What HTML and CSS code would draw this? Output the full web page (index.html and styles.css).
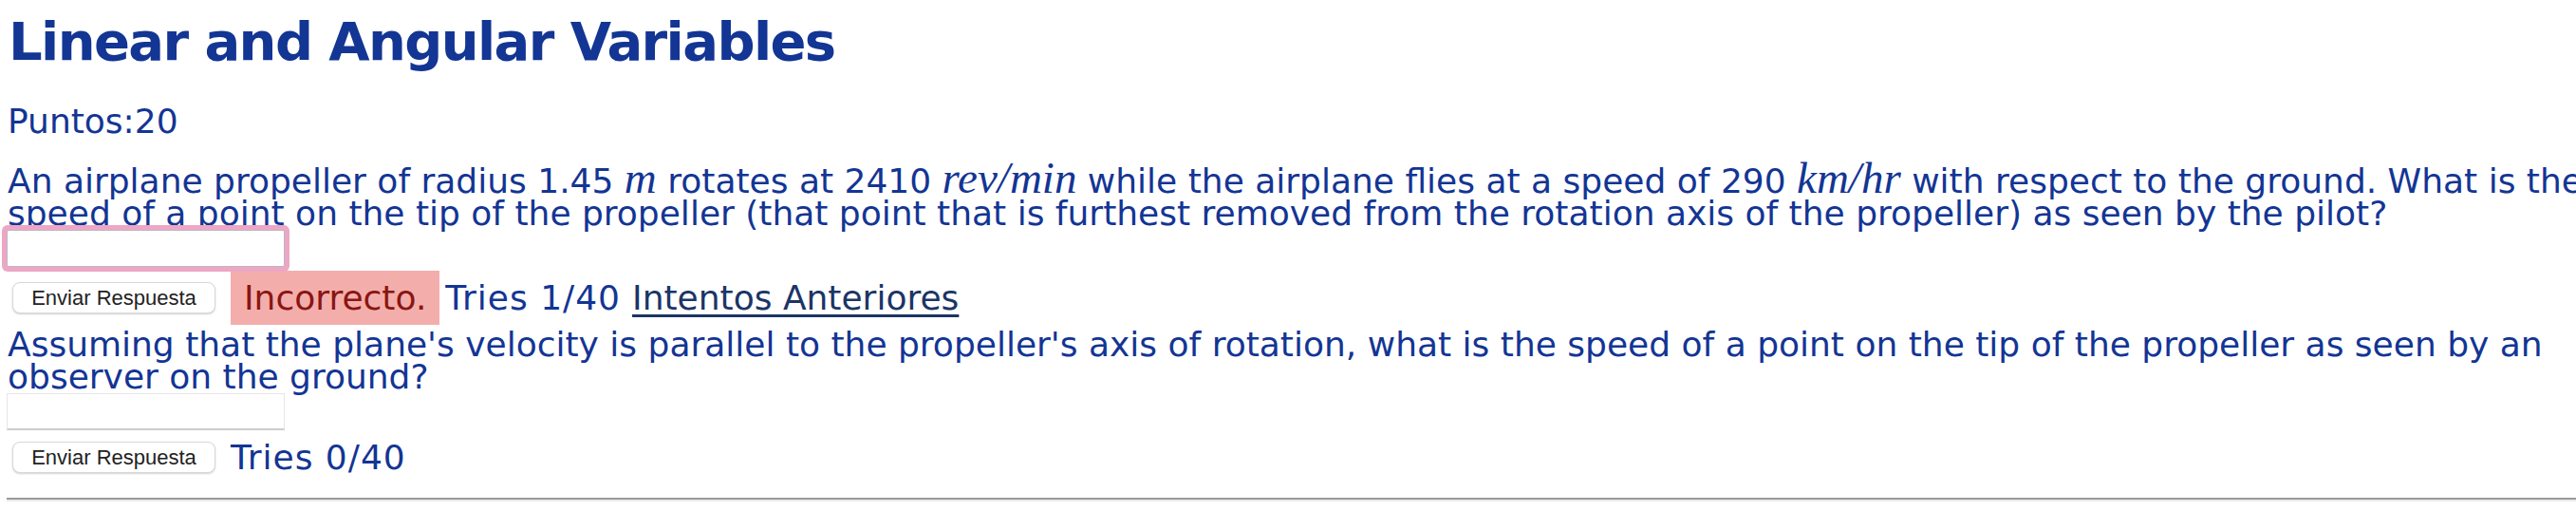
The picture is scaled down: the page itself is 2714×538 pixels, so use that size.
FILE: index.html
```html
<!DOCTYPE html>
<html lang="en">
<head>
<meta charset="utf-8">
<title>Linear and Angular Variables</title>
<link rel="stylesheet" href="styles.css">
</head>
<body>
<div class="page">
  <h1 class="title">Linear and Angular Variables</h1>
  <div class="points">Puntos:20</div>
  <div class="problem">
    <p class="question">An airplane propeller of radius 1.45 <span class="math">m</span> rotates at 2410 <span class="math">rev/min</span> while the airplane flies at a speed of 290 <span class="math">km/hr</span> with respect to the ground. What is the speed of a point on the tip of the propeller (that point that is furthest removed from the rotation axis of the propeller) as seen by the pilot?</p>
    <input class="answer answer-focused" type="text">
    <div class="submit-row">
      <button class="submit-btn" type="button">Enviar Respuesta</button>
      <span class="badge-incorrect">Incorrecto.</span>
      <span class="tries">Tries 1/40</span>
      <a class="prev-link" href="#">Intentos Anteriores</a>
    </div>
    <p class="question">Assuming that the plane's velocity is parallel to the propeller's axis of rotation, what is the speed of a point on the tip of the propeller as seen by an observer on the ground?</p>
    <input class="answer" type="text">
    <div class="submit-row submit-row-last">
      <button class="submit-btn" type="button">Enviar Respuesta</button>
      <span class="tries">Tries 0/40</span>
    </div>
  </div>
  <hr class="divider">
</div>
</body>
</html>
```
FILE: styles.css
```css
html, body {
  margin: 0;
  padding: 0;
  background: #ffffff;
  overflow: hidden;
}

.page {
  width: 2800px;
  padding: 11px 0 0 7px;
  font-family: "DejaVu Sans", Verdana, sans-serif;
  color: #133594;
}

.title {
  margin: 0;
  font-size: 56px;
  letter-spacing: -1.6px;
  font-weight: bold;
  line-height: normal;
  padding-left: 2px;
}

.points {
  margin-top: 31px;
  font-size: 36px;
  line-height: normal;
  padding-left: 1px;
}

.problem {
  margin-top: 26px;
}

.question {
  margin: 0;
  font-size: 36px;
  line-height: 34px;
  padding-left: 1px;
}

.math {
  font-family: "Liberation Serif", "Times New Roman", serif;
  font-style: italic;
  font-size: 47px;
  line-height: 0;
}

.answer {
  display: block;
  box-sizing: border-box;
  width: 293px;
  height: 39px;
  margin: 0;
  padding: 0 6px;
  background: #ffffff;
  border: 1px solid #e6e6e6;
  border-bottom: 2px solid #cdcdcd;
  border-radius: 0;
  outline: none;
}

.answer-focused {
  border: 1px solid #b9b9c4;
  border-radius: 2px;
  box-shadow: 0 0 0 5px #eda7c4;
  position: relative;
}

.submit-row {
  display: flex;
  align-items: center;
  height: 57px;
  margin-top: 4px;
}

.submit-row-last {
  margin-top: 0;
}

.submit-row + .question {
  margin-top: 4px;
}

.submit-btn {
  box-sizing: border-box;
  width: 214px;
  height: 33px;
  margin: 0 16px 0 6px;
  padding: 0;
  background: #ffffff;
  border: 1px solid #d8d8d8;
  border-radius: 8px;
  box-shadow: 0 1px 2px rgba(0, 0, 0, 0.18);
  font-family: "Liberation Sans", Arial, sans-serif;
  font-size: 22px;
  color: #222222;
}

.badge-incorrect {
  box-sizing: border-box;
  height: 57px;
  padding: 0 14px;
  display: flex;
  align-items: center;
  background: #f3aeab;
  color: #8a1512;
  font-size: 36px;
  margin-right: 6px;
}

.tries {
  font-size: 36px;
  letter-spacing: 1px;
  margin-right: 12px;
}

.prev-link {
  font-size: 36px;
  color: #1b3566;
  text-decoration: underline;
  text-decoration-thickness: 3px;
  text-underline-offset: 5px;
}

.divider {
  margin: 14px 0 0 0;
  height: 0;
  border: 0;
  border-top: 2px solid #9a9a9a;
  border-bottom: 2px solid #ebebeb;
}
```
